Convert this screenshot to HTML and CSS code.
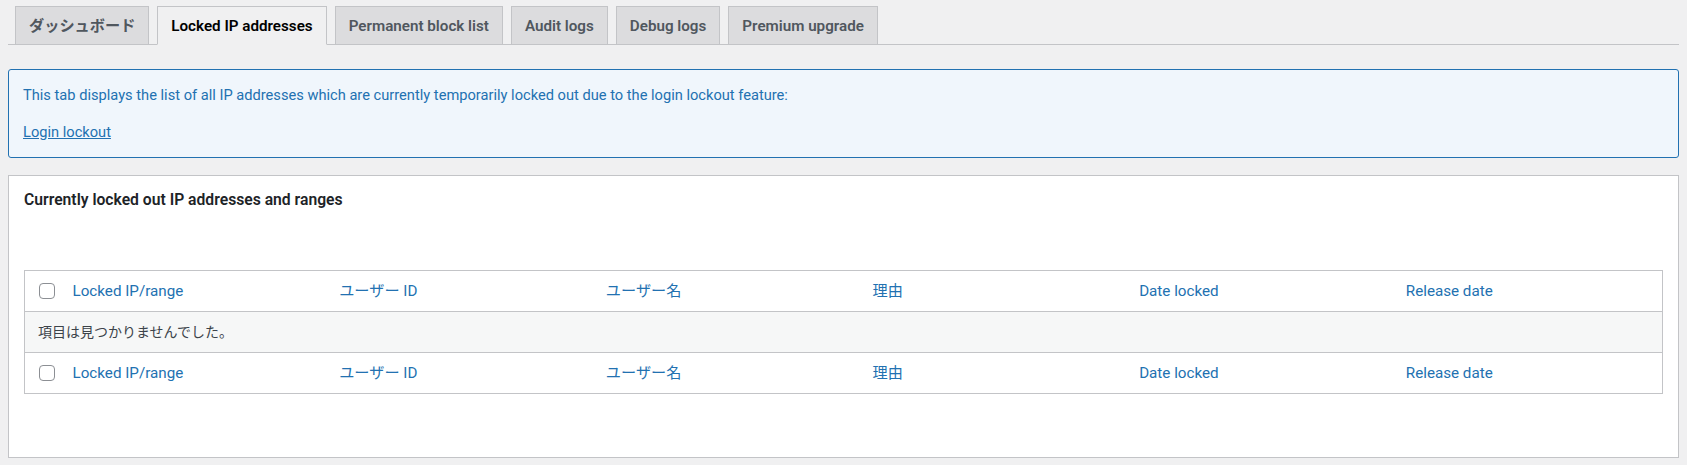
FILE: index.html
```html
<!DOCTYPE html>
<html lang="ja">

<head>
    <meta charset="UTF-8">
    <meta name="viewport" content="width=device-width, initial-scale=1.0">
    <title>Locked IP addresses</title>
    <link rel="stylesheet" href="styles.css">
</head>

<body>
    <div class="wrap">
        <!-- Abas -->
        <nav class="nav-tab-wrapper">
            <a class="nav-tab" href="#">ダッシュボード</a>
            <a class="nav-tab nav-tab-active" href="#">Locked IP addresses</a>
            <a class="nav-tab" href="#">Permanent block list</a>
            <a class="nav-tab" href="#">Audit logs</a>
            <a class="nav-tab" href="#">Debug logs</a>
            <a class="nav-tab" href="#">Premium upgrade</a>
        </nav>

        <div class="notice">
            <p>This tab displays the list of all IP addresses which are currently temporarily locked out due to the login lockout feature:</p>
            <p><a href="#">Login lockout</a></p>
        </div>

        <div class="postbox">
            <h3 class="hndle">Currently locked out IP addresses and ranges</h3>
            <div class="inside">
                <div class="tablenav"></div>
                <table class="list-table">
                    <thead>
                        <tr>
                            <td class="check-column"><span class="checkbox"></span></td>
                            <th><a href="#">Locked IP/range</a></th>
                            <th><a href="#">ユーザー ID</a></th>
                            <th><a href="#">ユーザー名</a></th>
                            <th><a href="#">理由</a></th>
                            <th><a href="#">Date locked</a></th>
                            <th><a href="#">Release date</a></th>
                        </tr>
                    </thead>
                    <tbody>
                        <tr class="no-items">
                            <td colspan="7">項目は見つかりませんでした。</td>
                        </tr>
                    </tbody>
                    <tfoot>
                        <tr>
                            <td class="check-column"><span class="checkbox"></span></td>
                            <th><a href="#">Locked IP/range</a></th>
                            <th><a href="#">ユーザー ID</a></th>
                            <th><a href="#">ユーザー名</a></th>
                            <th><a href="#">理由</a></th>
                            <th><a href="#">Date locked</a></th>
                            <th><a href="#">Release date</a></th>
                        </tr>
                    </tfoot>
                </table>
            </div>
        </div>
    </div>
</body>

</html>
```

FILE: styles.css
```css
* {
    box-sizing: border-box;
}

body {
    margin: 0;
    background-color: #f0f0f1;
    color: #3c434a;
    font-family: Roboto, "Noto Sans CJK JP", sans-serif;
    font-size: 14px;
}

.wrap {
    padding: 0 8px;
}

/* Abas */
.nav-tab-wrapper {
    display: flex;
    gap: 8px;
    padding: 6px 0 0 7px;
    border-bottom: 1px solid #c3c4c7;
}

.nav-tab {
    display: block;
    margin-bottom: -1px;
    padding: 7px 13px 6px;
    background-color: #dcdcde;
    border: 1px solid #c3c4c7;
    color: #50575e;
    font-size: 15.2px;
    font-weight: 600;
    line-height: 24px;
    text-decoration: none;
}

.nav-tab-active {
    background-color: #f0f0f1;
    border-bottom-color: #f0f0f1;
    color: #000;
}

/* Aviso azul */
.notice {
    margin-top: 24px;
    padding: 0 14px;
    background-color: #f0f6fc;
    border: 1px solid #2271b1;
    border-radius: 3px;
    color: #2271b1;
    font-size: 14.65px;
}

.notice p {
    margin: 15px 0;
    line-height: 20px;
}

.notice p + p {
    margin-top: 17px;
}

.notice a {
    color: #2271b1;
}

/* Caixa da tabela */
.postbox {
    margin-top: 17px;
    height: 283px;
    background-color: #fff;
    border: 1px solid #c3c4c7;
}

.hndle {
    margin: 0;
    padding: 14px 15px 0;
    color: #1d2327;
    font-size: 15.7px;
    font-weight: 600;
    line-height: 20px;
}

.inside {
    padding: 0 15px;
}

.tablenav {
    height: 60px;
}

.list-table {
    width: 100%;
    table-layout: fixed;
    border-collapse: collapse;
    border: 1px solid #c3c4c7;
}

.list-table th,
.list-table td {
    padding: 8px 10px;
    text-align: left;
    font-weight: 400;
    line-height: 24px;
}

.list-table a {
    color: #2271b1;
    text-decoration: none;
    font-size: 15.2px;
}

.list-table .check-column {
    width: 38px;
    padding: 8px 0 0 14px;
    vertical-align: middle;
}

.checkbox {
    display: block;
    width: 16px;
    height: 16px;
    margin-top: -8px;
    background-color: #fff;
    border: 1px solid #8c8f94;
    border-radius: 4px;
}

thead tr {
    border-bottom: 1px solid #c3c4c7;
}

tfoot tr {
    border-top: 1px solid #c3c4c7;
}

.list-table .no-items td {
    padding: 8px 13px;
    background-color: #f6f7f7;
    color: #3c434a;
    font-size: 14px;
}
```
